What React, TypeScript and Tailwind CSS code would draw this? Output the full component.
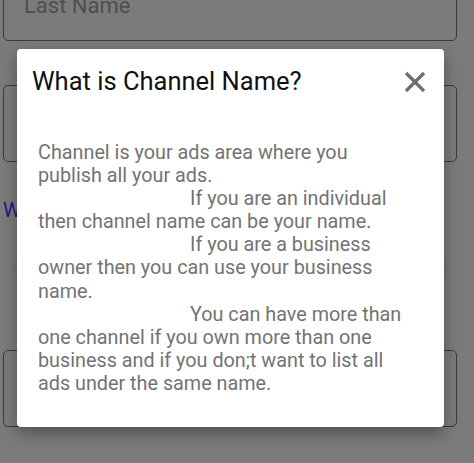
import React from "react";

// Background form (dimmed behind a dialog) with the "What is Channel Name?" help modal on top.

const lines: { text: string; indent?: boolean }[] = [
  { text: "Channel is your ads area where you" },
  { text: "publish all your ads." },
  { text: "If you are an individual", indent: true },
  { text: "then channel name can be your name." },
  { text: "If you are a business", indent: true },
  { text: "owner then you can use your business" },
  { text: "name." },
  { text: "You can have more than", indent: true },
  { text: "one channel if you own more than one" },
  { text: "business and if you don;t want to list all" },
  { text: "ads under the same name." },
];

export default function App() {
  return (
    <div
      className="relative h-[463px] w-[474px] overflow-hidden bg-[#7b7b7b]"
      style={{ fontFamily: "Roboto, 'Noto Sans', sans-serif" }}
    >
      {/* dimmed form underneath */}
      <div className="flex flex-col px-[3px] pr-[17px]">
        <div className="-mt-[30px] flex h-[71px] items-center rounded-[5px] border border-[#3a3a3a] px-[20px] text-[22px] text-[#4e4e4e]">
          Last Name
        </div>
        <div className="mt-[44px] h-[77px] rounded-[5px] border border-[#3a3a3a]" />
        <div className="mt-[36px] text-[20px] leading-[24px] text-[#1a1a8a]">W</div>
        <div className="mx-[9px] mt-[30px] h-[32px] rounded-full bg-[#777777]" />
        <div className="mt-[66px] h-[77px] rounded-[5px] border border-[#3a3a3a]" />
      </div>

      {/* modal */}
      <div className="absolute left-[17px] top-[49px] h-[378px] w-[427px] rounded-[4px] bg-white shadow-[0_6px_16px_rgba(0,0,0,0.35)]">
        <div className="flex items-start justify-between pl-[15px] pr-[18px] pt-[17px]">
          <h2 className="text-[25.5px] leading-[30px] text-[#111111]">What is Channel Name?</h2>
          <svg width="22" height="22" viewBox="0 0 22 22" className="mt-[5px]">
            <path d="M2 2 L20 20 M20 2 L2 20" stroke="#6e6e6e" strokeWidth="3.2" strokeLinecap="butt" />
          </svg>
        </div>
        <div className="mt-[45px] pl-[21px] text-[19.8px] leading-[23.1px] text-[#737373]">
          {lines.map((l, i) => (
            <div key={i} className={l.indent ? "pl-[152px]" : ""}>
              {l.text}
            </div>
          ))}
        </div>
      </div>
    </div>
  );
}
